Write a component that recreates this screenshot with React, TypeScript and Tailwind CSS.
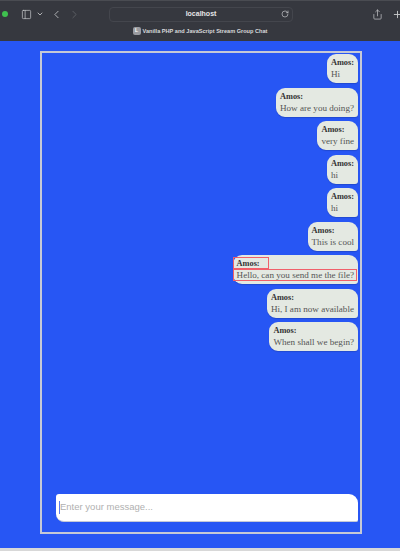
import React from 'react';
import { ChevronLeft, ChevronRight, ChevronDown, RotateCw, Share, Plus, PanelLeft } from 'lucide-react';

const messages = [
  { text: 'Hi' },
  { text: 'How are you doing?' },
  { text: 'very fine' },
  { text: 'hi' },
  { text: 'hi' },
  { text: 'This is cool' },
  { text: 'Hello, can you send me the file?', marked: true },
  { text: 'Hi, I am now available' },
  { text: 'When shall we begin?' },
];

function Toolbar() {
  return (
    <div className="bg-[#36383f] h-[41px] shrink-0 flex flex-col border-t border-[#4a4c52]" style={{ fontFamily: '"Liberation Sans", sans-serif' }}>
      <div className="h-[26px] flex items-center text-[#c9cacd] relative">
        <span className="ml-[2px] w-[6px] h-[6px] rounded-full bg-[#3fc04f]" />
        <PanelLeft className="ml-[13px] w-[11px] h-[11px]" strokeWidth={1.5} />
        <ChevronDown className="ml-[4px] w-[8px] h-[8px]" strokeWidth={2.5} />
        <ChevronLeft className="ml-[6px] w-[13px] h-[13px]" strokeWidth={1.5} />
        <ChevronRight className="ml-[5px] w-[13px] h-[13px] text-[#63656a]" strokeWidth={1.5} />
        <div className="ml-[28px] w-[184px] h-[15px] rounded-[4px] border border-[#44464d] flex items-center justify-center relative">
          <span className="text-[7px] font-bold text-[#e6e6e8]">localhost</span>
          <RotateCw className="absolute right-[3px] top-[2px] w-[8px] h-[8px]" strokeWidth={2} />
        </div>
        <Share className="ml-auto w-[11px] h-[11px]" strokeWidth={1.5} />
        <Plus className="ml-[9px] mr-[-3px] w-[11px] h-[11px]" strokeWidth={2} />
      </div>
      <div className="flex-1 flex items-start justify-center gap-[2px]">
        <span className="w-[8px] h-[8px] rounded-[2px] bg-[#9a9ba0] text-white text-[5px] font-bold flex items-center justify-center">L</span>
        <span className="text-[5.6px] leading-[8px] font-bold text-[#d8d9db]">Vanilla PHP and JavaScript Stream Group Chat</span>
      </div>
    </div>
  );
}

function Bubble({ text, marked }: { text: string; marked?: boolean }) {
  return (
    <div className="self-end h-[29px] bg-[#e4e9e2] rounded-tl-[9px] rounded-tr-[9px] rounded-bl-[9px] rounded-br-[3px] pl-[4px] pr-[4px] pt-[2px] text-[9.1px] leading-[12px] shadow-[0_1px_1px_rgba(0,0,0,0.15)]">
      <div className="font-bold text-[#333] text-[8.3px] pt-px h-[12px]">
        {marked ? <span className="block w-[36px] border border-[#f0606a] -ml-[4px] -mt-px pl-[3px] h-[12px] leading-[11px]">Amos:</span> : 'Amos:'}
      </div>
      {marked ? (
        <div className="border border-[#f0606a] -ml-[4px] -mr-[3px] pl-[3px] pr-[2px] h-[12px] leading-[10px] text-[#555]">{text}</div>
      ) : (
        <div className="text-[#555]">{text}</div>
      )}
    </div>
  );
}

export default function App() {
  return (
    <div className="w-[400px] h-[559px] flex flex-col bg-white overflow-hidden">
      <Toolbar />
      <div className="h-[510px] bg-[#2756f4] pt-[10px] pl-[40px] shrink-0 border-b-[3px] border-[#d8d8d8]">
        <div className="w-[322px] h-[483px] border-2 border-[#c5c9d6] flex flex-col pl-[14px] pr-[2px] pt-[1px]" style={{ fontFamily: '"Liberation Serif", serif' }}>
          <div className="flex flex-col gap-[4.5px]">
            {messages.map((m, i) => (
              <Bubble key={i} text={m.text} marked={m.marked} />
            ))}
          </div>
          <div className="mt-auto mb-[10px] h-[28px] bg-white rounded-tl-[3px] rounded-tr-[9px] rounded-bl-[8px] rounded-br-[2px] flex items-center pl-[3px] border-b border-[#c5c9d6]" style={{ fontFamily: '"Liberation Sans", sans-serif' }}>
            <span className="w-px h-[13px] bg-[#5a7bf0]" />
            <span className="text-[9.5px] text-[#b0b0b0]">Enter your message...</span>
          </div>
        </div>
      </div>
    </div>
  );
}
